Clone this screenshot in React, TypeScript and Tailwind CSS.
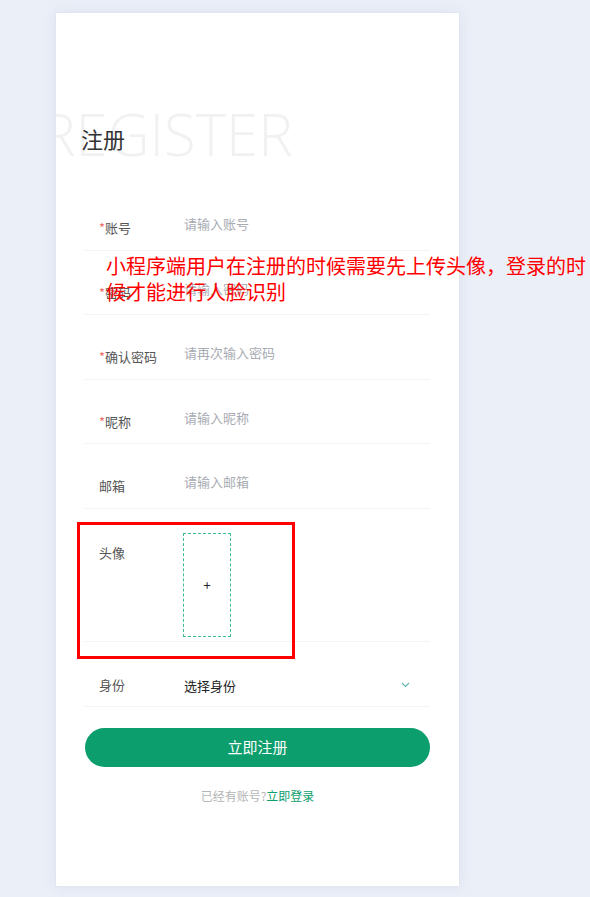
import React from "react";

const cjk = { fontFamily: '"Noto Sans CJK SC", "Noto Sans", sans-serif' };

function Row({
  label,
  required,
  placeholder,
}: {
  label: string;
  required?: boolean;
  placeholder: string;
}) {
  return (
    <div className="h-[64.5px] border-b border-[#f2f3f5] flex items-start">
      <div className="w-[99px] pl-[14px] pt-[34px] text-[13px] leading-[16px] text-[#555]">
        {required && <span className="text-[#f56c6c]">*</span>}
        {label}
      </div>
      <div className="pt-[30px] text-[13px] leading-[16px] text-[#a8abb2]">{placeholder}</div>
    </div>
  );
}

export default function App() {
  return (
    <div className="relative w-[590px] h-[897px] overflow-hidden bg-[#ebeff8]" style={cjk}>
      <div className="pt-[12px] pl-[55px]">
        <div className="relative w-[405px] h-[875px] bg-white border border-[#e2e6ee] overflow-hidden shadow-[0_0_12px_rgba(180,190,210,0.25)]">
          <div
            className="absolute left-[-15px] top-[81px] text-[58px] leading-[80px] font-light text-[#f1f1f1] select-none"
            style={{ fontFamily: '"Open Sans", sans-serif' }}
          >
            REGISTER
          </div>
          <div className="relative pt-[109px] pl-[25px] text-[22px] leading-[32px] text-[#333]">注册</div>
          <div className="relative mx-[29px] mt-[32px]">
            <Row label="账号" required placeholder="请输入账号" />
            <Row label="密码" required placeholder="请输入密码" />
            <Row label="确认密码" required placeholder="请再次输入密码" />
            <Row label="昵称" required placeholder="请输入昵称" />
            <Row label="邮箱" placeholder="请输入邮箱" />
            <div className="h-[133px] border-b border-[#f2f3f5] flex items-start">
              <div className="w-[98px] pl-[14px] pt-[36px] text-[13px] leading-[16px] text-[#555]">头像</div>
              <div className="mt-[24px] w-[48px] h-[104px] border border-dashed border-[#3dbb94] flex items-center justify-center text-[13px] text-[#222]">
                +
              </div>
            </div>
            <div className="h-[65px] border-b border-[#f2f3f5] flex items-start">
              <div className="w-[99px] pl-[14px] pt-[35px] text-[13px] leading-[16px] text-[#555]">身份</div>
              <div className="flex-1 pt-[36px] text-[13px] leading-[16px] text-[#222]">选择身份</div>
              <div className="pt-[40px] pr-[20px]">
                <svg width="9" height="6" viewBox="0 0 9 6" fill="none">
                  <path d="M1 1 L4.5 4.5 L8 1" stroke="#5fb3b0" strokeWidth="1.1" />
                </svg>
              </div>
            </div>
            <button className="mt-[21px] w-full h-[39px] rounded-full bg-[#0d9e6d] text-white text-[15px] flex items-center justify-center">
              立即注册
            </button>
            <div className="mt-[21px] text-center text-[12px] leading-[16px] text-[#b5b5b5]">
              已经有账号?<span className="text-[#0d9e6d]">立即登录</span>
            </div>
          </div>
        </div>
      </div>

      <div className="absolute left-[77px] top-[522px] w-[218px] h-[137px] border-[3px] border-[#ff0000]" />
      <div className="absolute left-[106px] top-[253px] w-[484px] text-[20px] leading-[26px] text-[#ff0000]">
        小程序端用户在注册的时候需要先上传头像，登录的时候才能进行人脸识别
      </div>
    </div>
  );
}
